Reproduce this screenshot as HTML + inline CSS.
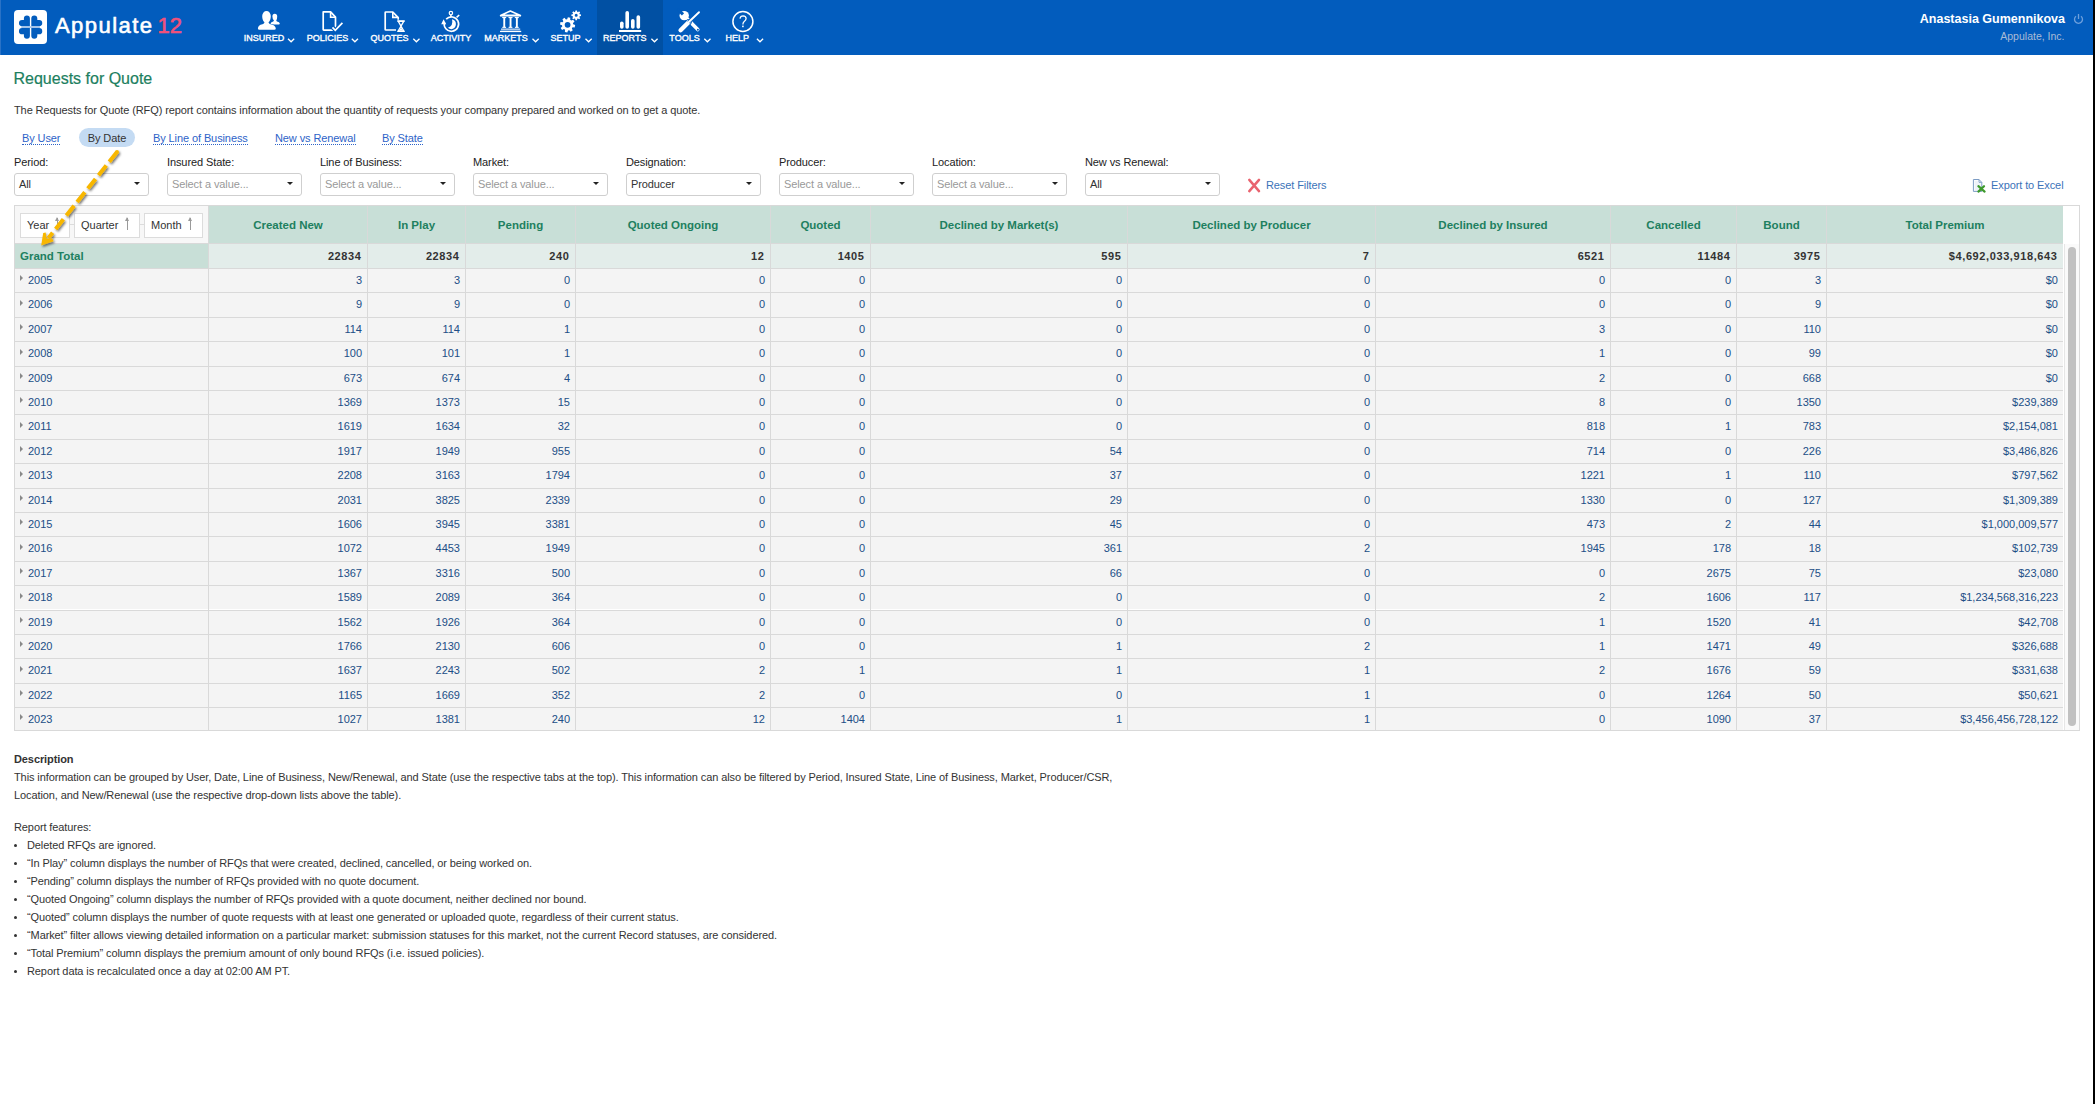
<!DOCTYPE html>
<html><head><meta charset="utf-8">
<style>
*{box-sizing:border-box}
html,body{margin:0;padding:0}
body{width:2095px;height:1104px;overflow:hidden;position:relative;background:#fff;font-family:"Liberation Sans",sans-serif;color:#333}
.abs{position:absolute}
#stripe{position:absolute;left:2093px;top:0;width:2px;height:1104px;background:#000}
/* nav */
#nav{position:absolute;left:0;top:0;width:2093px;height:55px;background:#025cbd}
#logo{position:absolute;left:14px;top:10px;width:33px;height:34px;background:#fff;border-radius:4px}
#brand{position:absolute;left:55px;top:11px;font-size:22px;color:#fff;letter-spacing:1.45px;line-height:30px;white-space:nowrap;-webkit-text-stroke:0.6px #fff}
#brand b{font-weight:normal;color:#f0517a;-webkit-text-stroke:0.6px #f0517a;letter-spacing:0px;margin-left:-3.5px}
.ni{position:absolute;top:0;height:55px}
.nl{position:absolute;top:33.2px;font-size:9px;color:#fff;line-height:11px;white-space:nowrap;-webkit-text-stroke:0.35px #fff}
.chev{position:absolute;top:38px;width:7px;height:4px}
#active{position:absolute;left:597px;top:0;width:66px;height:55px;background:#0150a3}
#uname{position:absolute;right:28px;top:12px;font-size:12.5px;font-weight:bold;color:#fff;white-space:nowrap;line-height:14px}
#ucomp{position:absolute;right:28.5px;top:29.5px;font-size:10.5px;color:#a9bbd6;white-space:nowrap;line-height:12px}
/* page */
#title{position:absolute;left:13.5px;top:69px;font-size:16px;color:#1c8060;-webkit-text-stroke:0.2px #1c8060;line-height:20px;white-space:nowrap}
#intro{position:absolute;left:14px;top:104px;font-size:11px;letter-spacing:-0.1px;color:#333;line-height:13px;white-space:nowrap}
.tab{position:absolute;top:132px;font-size:11px;color:#2d63c8;line-height:12px;white-space:nowrap;border-bottom:1px dotted #2d63c8;letter-spacing:-0.1px}
#pilltab{position:absolute;left:79px;top:128px;width:56px;height:19px;border-radius:10px;background:#c4dbf3;font-size:11px;color:#333;line-height:21px;text-align:center;letter-spacing:-0.1px}
.flab{position:absolute;top:156px;font-size:11px;color:#222;line-height:13px;white-space:nowrap;letter-spacing:-0.1px}
.sel{position:absolute;top:173px;width:135px;height:23px;border:1px solid #cfcfcf;border-radius:3px;background:#fff;font-size:11px;line-height:21px;padding-left:4px;color:#333;white-space:nowrap;letter-spacing:-0.1px}
.sel.ph{color:#999}
.sel:after{content:"";position:absolute;right:8px;top:8px;border-left:3px solid transparent;border-right:3px solid transparent;border-top:3px solid #222}
#reset{position:absolute;left:1266px;top:179px;font-size:11px;color:#3b73b9;line-height:13px;white-space:nowrap;letter-spacing:-0.1px}
#export{position:absolute;left:1991px;top:179px;font-size:11px;color:#3b73b9;line-height:13px;white-space:nowrap;letter-spacing:-0.1px}
/* table */
#tblbox{position:absolute;left:14px;top:205px;width:2066px;height:526px;border:1px solid #d9d9d9;background:#fff}
#tbl div{position:absolute}
.hc0{background:#f7f7f7}
.pill{border:1px solid #dcdcdc;background:#fff;font-size:11px;color:#333;line-height:23px;padding-left:6px;white-space:nowrap}
.pill .up{position:absolute;right:11px;top:4px;width:1.5px;height:12px;background:#9a9a9a}
.pill .up:before{content:"";position:absolute;left:-2px;top:-1px;border-left:2.5px solid transparent;border-right:2.5px solid transparent;border-bottom:4px solid #9a9a9a}
.conn{height:1px;background:#dcdcdc}
.hc{background:#c8dfd7;color:#1e8060;font-weight:bold;font-size:11.5px;line-height:38px;text-align:center;white-space:nowrap}
.gtl{background:#c8dfd7;color:#1e8060;font-weight:bold;font-size:11.5px;line-height:24px;padding-left:5px;white-space:nowrap}
.gtc{background:#e3edea;color:#333;font-weight:bold;font-size:11px;letter-spacing:0.6px;line-height:24px;text-align:right;padding-right:5.5px;white-space:nowrap}
.dl{background:#f4f4f4;color:#214e86;font-size:11px;line-height:22.8px;padding-left:13px;white-space:nowrap}
.dl .tri{position:absolute;left:5px;top:6.4px;border-top:3px solid transparent;border-bottom:3px solid transparent;border-left:3px solid #888}
.dc{background:#f4f4f4;color:#214e86;font-size:11px;line-height:22.8px;text-align:right;padding-right:5px;white-space:nowrap}
.hl{left:15px;width:2048px;height:1px;background:#d9d9d9}
.vl{top:206px;width:1px;height:524px;background:#d9d9d9}
#sbtrack{position:absolute;left:2064px;top:244px;width:15px;height:486px;background:#fafafa;border-left:1px solid #e6e6e6}
#sbthumb{position:absolute;left:2068px;top:247px;width:8px;height:479px;border-radius:4px;background:#c1c1c1}
/* description */
#desc{position:absolute;left:14px;top:750px;font-size:11px;line-height:18px;color:#333;letter-spacing:-0.1px;white-space:nowrap}
#desc b{display:block}
#desc ul{margin:0;padding:0;list-style:none}
#desc li{position:relative;padding-left:13px}
#desc li:before{content:"";position:absolute;left:0px;top:8px;width:3px;height:3px;border-radius:50%;background:#333}
#arrow{position:absolute;left:0;top:0}
</style></head>
<body>
<div id="nav"><div style="position:absolute;left:0;top:0;width:1px;height:55px;background:#2a72c6"></div>
  <div id="logo">
    <svg width="33" height="34" viewBox="14 10 33 34" style="position:absolute;left:0;top:0">
      <g fill="#025cbd">
        <path d="M29.9 26.2 L29.9 18.4 A3 3 0 0 0 23.9 18.4 L23.9 19.9 L22.1 19.9 A3.1 3.1 0 0 0 22.1 26.2 Z"/>
        <path d="M29.9 26.2 L29.9 18.4 A3 3 0 0 0 23.9 18.4 L23.9 19.9 L22.1 19.9 A3.1 3.1 0 0 0 22.1 26.2 Z" transform="matrix(-1 0 0 1 61.2 0)"/>
        <path d="M29.9 26.2 L29.9 18.4 A3 3 0 0 0 23.9 18.4 L23.9 19.9 L22.1 19.9 A3.1 3.1 0 0 0 22.1 26.2 Z" transform="matrix(1 0 0 -1 0 54.2)"/>
        <path d="M29.9 26.2 L29.9 18.4 A3 3 0 0 0 23.9 18.4 L23.9 19.9 L22.1 19.9 A3.1 3.1 0 0 0 22.1 26.2 Z" transform="matrix(-1 0 0 -1 61.2 54.2)"/>
      </g>
      <rect x="21.3" y="26.3" width="18.6" height="1.6" fill="#9bbde6"/>
    </svg>
  </div>
  <div id="brand">Appulate <b>12</b></div>
  <div id="active"></div>
  <div class="nl" style="left:243.8px">INSURED</div>
<div class="nl" style="left:306.7px">POLICIES</div>
<div class="nl" style="left:370.5px">QUOTES</div>
<div class="nl" style="left:430.8px">ACTIVITY</div>
<div class="nl" style="left:484.2px">MARKETS</div>
<div class="nl" style="left:550.4px">SETUP</div>
<div class="nl" style="left:603.1px">REPORTS</div>
<div class="nl" style="left:669.3px">TOOLS</div>
<div class="nl" style="left:725.4px">HELP</div>
<svg class="abs" style="left:0;top:0" width="800" height="55" viewBox="0 0 800 55">
<path d="M288.0 38.8 L291.1 41.8 L294.2 38.8" fill="none" stroke="#fff" stroke-width="1.3"/>
<path d="M351.8 38.8 L354.9 41.8 L358.0 38.8" fill="none" stroke="#fff" stroke-width="1.3"/>
<path d="M413.3 38.8 L416.4 41.8 L419.5 38.8" fill="none" stroke="#fff" stroke-width="1.3"/>
<path d="M532.5 38.8 L535.6 41.8 L538.7 38.8" fill="none" stroke="#fff" stroke-width="1.3"/>
<path d="M585.5 38.8 L588.6 41.8 L591.7 38.8" fill="none" stroke="#fff" stroke-width="1.3"/>
<path d="M651.4 38.8 L654.5 41.8 L657.6 38.8" fill="none" stroke="#fff" stroke-width="1.3"/>
<path d="M704.3 38.8 L707.4 41.8 L710.5 38.8" fill="none" stroke="#fff" stroke-width="1.3"/>
<path d="M756.9 38.8 L760.0 41.8 L763.1 38.8" fill="none" stroke="#fff" stroke-width="1.3"/>
<path d="M270.5 23.8 Q271 21.8 273.2 21.4 Q273.9 21.2 273.9 20.2 Q272.4 19 272.4 16.5 A2.4 2.8 0 0 1 277.2 16.5 Q277.2 19 276.3 20.2 Q276.3 21.2 277 21.4 Q279.6 21.8 279.8 23.6 Q279.8 24.6 278.8 24.6 L271.5 24.6 Q270.5 24.6 270.5 23.8Z" fill="#fff"/><path d="M257.9 28.6 Q258 25.2 262.5 24.3 Q264.3 23.9 264.5 22.2 Q262.2 20.5 262.2 16 A4.3 5.1 0 0 1 270.8 16 Q270.8 20.5 268.5 22.2 Q268.7 23.9 270.5 24.3 Q275.5 25.2 275.8 28.6 Q275.8 29.8 274.3 29.8 L259.4 29.8 Q257.9 29.8 257.9 28.6Z" fill="#fff" stroke="#025cbd" stroke-width="1.1" paint-order="stroke"/>
<path d="M323.2 11.9 H330.6 L335.5 17.2 V29.6 Q335.5 30.1 335 30.1 H323.7 Q323.2 30.1 323.2 29.6Z" fill="none" stroke="#fff" stroke-width="1.7" stroke-linejoin="round"/><path d="M330.6 12 V17.3 H335.6" fill="none" stroke="#fff" stroke-width="1.6"/><path d="M332.5 27.3 L335.3 30.3 L342.4 22.8" fill="none" stroke="#025cbd" stroke-width="4"/><path d="M332.5 27.3 L335.3 30.3 L342.4 22.8" fill="none" stroke="#fff" stroke-width="1.7"/>
<path d="M398.2 19.8 V17.6 L392.8 12 H385.8 Q385.2 12 385.2 12.6 V29.4 Q385.2 30 385.8 30 H396" fill="none" stroke="#fff" stroke-width="1.7" stroke-linejoin="round"/><path d="M392.8 12 V17.4 H398.2" fill="none" stroke="#fff" stroke-width="1.6"/><path d="M397.2 21 H404.8 M397.2 31.4 H404.8" stroke="#fff" stroke-width="1.4"/><path d="M398.3 21.4 L403.7 21.4 L401 26.1 L403.7 30.8 L398.3 30.8 L401 26.1Z" fill="none" stroke="#fff" stroke-width="1.3" stroke-linejoin="round"/><path d="M399.3 30.3 L402.7 30.3 L401 27.6Z" fill="#fff"/>
<path d="M446.2 19.1 A7.2 7.2 0 1 1 444.45 22.2" fill="none" stroke="#fff" stroke-width="1.7"/><path d="M441.2 24.3 L443.6 19.2 L446.2 24.3Z" fill="#fff"/><circle cx="450.9" cy="13.1" r="1.7" fill="none" stroke="#fff" stroke-width="1.2"/><path d="M450.9 14.8 V17" stroke="#fff" stroke-width="1.5"/><path d="M456.6 17.4 L459.2 15" stroke="#fff" stroke-width="1.6"/><path d="M452 19.2 A5.1 5.1 0 0 1 451.6 29.2 Q449.4 29.2 447.9 27.8 Q453.6 25.6 452 19.2Z" fill="#fff"/>
<path d="M500.6 15.4 L510.3 11 L520.4 15.4Z" fill="none" stroke="#fff" stroke-width="1.6" stroke-linejoin="round"/><rect x="500" y="15" width="21" height="1.4" fill="#fff"/><rect x="502.2" y="17" width="4" height="1.1" fill="#fff"/><rect x="503.3" y="17.5" width="1.9" height="9.6" fill="#fff"/><rect x="502.3" y="26.8" width="3.8" height="1.1" fill="#fff"/><rect x="508.5" y="17" width="4" height="1.1" fill="#fff"/><rect x="509.6" y="17.5" width="1.9" height="9.6" fill="#fff"/><rect x="508.6" y="26.8" width="3.8" height="1.1" fill="#fff"/><rect x="514.8" y="17" width="4" height="1.1" fill="#fff"/><rect x="515.9" y="17.5" width="1.9" height="9.6" fill="#fff"/><rect x="514.9" y="26.8" width="3.8" height="1.1" fill="#fff"/><rect x="501" y="28.4" width="19.2" height="1.9" fill="#a9c7eb"/><rect x="500" y="30.8" width="21.2" height="1.3" fill="#fff"/>
<path d="M573.18 24.37 L575.19 25.08 L574.70 27.50 L572.58 27.37 L571.85 28.45 L572.77 30.37 L570.71 31.73 L569.30 30.13 L568.03 30.38 L567.32 32.39 L564.90 31.90 L565.03 29.78 L563.95 29.05 L562.03 29.97 L560.67 27.91 L562.27 26.50 L562.02 25.23 L560.01 24.52 L560.50 22.10 L562.62 22.23 L563.35 21.15 L562.43 19.23 L564.49 17.87 L565.90 19.47 L567.17 19.22 L567.88 17.21 L570.30 17.70 L570.17 19.82 L571.25 20.55 L573.17 19.63 L574.53 21.69 L572.93 23.10Z M570.50 24.80 A2.9 2.9 0 1 0 564.70 24.80 A2.9 2.9 0 1 0 570.50 24.80Z" fill="#fff" fill-rule="evenodd"/>
<path d="M579.66 14.32 L581.03 14.50 L581.03 16.10 L579.66 16.28 L579.34 17.05 L580.18 18.16 L579.06 19.28 L577.95 18.44 L577.18 18.76 L577.00 20.13 L575.40 20.13 L575.22 18.76 L574.45 18.44 L573.34 19.28 L572.22 18.16 L573.06 17.05 L572.74 16.28 L571.37 16.10 L571.37 14.50 L572.74 14.32 L573.06 13.55 L572.22 12.44 L573.34 11.32 L574.45 12.16 L575.22 11.84 L575.40 10.47 L577.00 10.47 L577.18 11.84 L577.95 12.16 L579.06 11.32 L580.18 12.44 L579.34 13.55Z M577.70 15.30 A1.5 1.5 0 1 0 574.70 15.30 A1.5 1.5 0 1 0 577.70 15.30Z" fill="#fff" fill-rule="evenodd"/>
<g fill="#fff"><rect x="620" y="21.4" width="3.6" height="7.4" rx="1.8"/><rect x="625.4" y="11" width="3.6" height="17.8" rx="1.8"/><rect x="631" y="19" width="3.6" height="9.8" rx="1.8"/><rect x="636.5" y="15.3" width="3.6" height="13.5" rx="1.8"/><rect x="619" y="30" width="22.2" height="2" /></g>
<circle cx="684.2" cy="15.6" r="4.7" fill="#fff"/><path d="M677.6 9.2 L683 14.4" stroke="#025cbd" stroke-width="3.1"/><path d="M685.6 17.2 L697.8 29.6" stroke="#fff" stroke-width="3.5" stroke-linecap="round"/><circle cx="697.9" cy="29.7" r="0.95" fill="#025cbd"/><path d="M680.6 30.2 L689 21.9 M689 21.9 L699.2 12" stroke="#025cbd" stroke-width="1.2" fill="none"/><path d="M680.6 30.2 L688.6 22.2" stroke="#025cbd" stroke-width="6.2" stroke-linecap="round"/><path d="M680.6 30.2 L688.6 22.2" stroke="#fff" stroke-width="4.4" stroke-linecap="round"/><path d="M688.4 22.4 L699 12.2" stroke="#025cbd" stroke-width="3.2"/><path d="M688 22.8 L699 12.2" stroke="#fff" stroke-width="1.9" stroke-linecap="round"/>
<circle cx="742.9" cy="21.5" r="10" fill="none" stroke="#fff" stroke-width="1.5"/><path d="M740 18.7 Q740.4 15.9 743.1 15.9 Q746.1 16 746.1 18.6 Q746.1 20.2 744.2 21.5 Q742.9 22.5 742.9 24.6" fill="none" stroke="#fff" stroke-width="1.3"/><rect x="742.1" y="25.6" width="1.6" height="1.6" fill="#fff"/>
</svg>
  <div id="uname">Anastasia Gumennikova</div>
  <div id="ucomp">Appulate, Inc.</div>
  <svg class="abs" style="left:2073px;top:12.5px" width="11" height="12" viewBox="0 0 11 12"><path d="M3 3.2 A4 4 0 1 0 8 3.2" fill="none" stroke="#6d9fdc" stroke-width="1.3"/><path d="M5.5 1 V6" stroke="#6d9fdc" stroke-width="1.3"/></svg>
</div>

<div id="title">Requests for Quote</div>
<div id="intro">The Requests for Quote (RFQ) report contains information about the quantity of requests your company prepared and worked on to get a quote.</div>
<div class="tab" style="left:22px">By User</div>
<div id="pilltab">By Date</div>
<div class="tab" style="left:153px">By Line of Business</div>
<div class="tab" style="left:275px">New vs Renewal</div>
<div class="tab" style="left:382px">By State</div>

<div class="flab" style="left:14px">Period:</div>
<div class="flab" style="left:167px">Insured State:</div>
<div class="flab" style="left:320px">Line of Business:</div>
<div class="flab" style="left:473px">Market:</div>
<div class="flab" style="left:626px">Designation:</div>
<div class="flab" style="left:779px">Producer:</div>
<div class="flab" style="left:932px">Location:</div>
<div class="flab" style="left:1085px">New vs Renewal:</div>
<div class="sel" style="left:14px">All</div>
<div class="sel ph" style="left:167px">Select a value...</div>
<div class="sel ph" style="left:320px">Select a value...</div>
<div class="sel ph" style="left:473px">Select a value...</div>
<div class="sel" style="left:626px">Producer</div>
<div class="sel ph" style="left:779px">Select a value...</div>
<div class="sel ph" style="left:932px">Select a value...</div>
<div class="sel" style="left:1085px">All</div>
<svg class="abs" style="left:1246px;top:177px" width="16" height="17" viewBox="0 0 16 17"><path d="M3.3 2.9 L13 14.1 M13 2.9 L3.3 14.1" stroke="#e9636f" stroke-width="2.5" stroke-linecap="round"/></svg>
<div id="reset">Reset Filters</div>
<svg class="abs" style="left:1970px;top:177px" width="18" height="17" viewBox="0 0 18 17"><path d="M3.4 2.5 H9 L11.8 5.4 V14.4 H3.4 Z" fill="#fbfcfe" stroke="#7d9cc4" stroke-width="1"/><path d="M9 2.5 V5.4 H11.8" fill="none" stroke="#7d9cc4" stroke-width="0.9"/><path d="M4.8 5 H8 M4.8 7 H10.5 M4.8 9 H10.5 M4.8 11 H10.5 M4.8 13 H10.5" stroke="#dde5f0" stroke-width="0.8"/><path d="M8.4 9.2 L14.6 14.6 M14 9.2 L8.4 14.6" stroke="#3d9a2c" stroke-width="2.2" stroke-linecap="round"/></svg>
<div id="export">Export to Excel</div>

<div id="tblbox"></div>
<div id="tbl">
<div class="hc0" style="left:15px;top:206px;width:193px;height:37px"></div>
<div class="pill" style="left:20px;top:213px;width:50px;height:25px"><span>Year</span><i class="up"></i></div>
<div class="pill" style="left:74px;top:213px;width:66px;height:25px"><span>Quarter</span><i class="up"></i></div>
<div class="pill" style="left:144px;top:213px;width:59px;height:25px"><span>Month</span><i class="up"></i></div>
<div class="conn" style="left:70px;top:224px;width:4px"></div>
<div class="conn" style="left:140px;top:224px;width:4px"></div>
<div class="hc" style="left:209px;top:206px;width:158px;height:37px">Created New</div>
<div class="hc" style="left:368px;top:206px;width:97px;height:37px">In Play</div>
<div class="hc" style="left:466px;top:206px;width:109px;height:37px">Pending</div>
<div class="hc" style="left:576px;top:206px;width:194px;height:37px">Quoted Ongoing</div>
<div class="hc" style="left:771px;top:206px;width:99px;height:37px">Quoted</div>
<div class="hc" style="left:871px;top:206px;width:256px;height:37px">Declined by Market(s)</div>
<div class="hc" style="left:1128px;top:206px;width:247px;height:37px">Declined by Producer</div>
<div class="hc" style="left:1376px;top:206px;width:234px;height:37px">Declined by Insured</div>
<div class="hc" style="left:1611px;top:206px;width:125px;height:37px">Cancelled</div>
<div class="hc" style="left:1737px;top:206px;width:89px;height:37px">Bound</div>
<div class="hc" style="left:1827px;top:206px;width:236px;height:37px">Total Premium</div>
<div class="gtl" style="left:15px;top:244px;width:193px;height:24px">Grand Total</div>
<div class="gtc" style="left:209px;top:244px;width:158px;height:24px"><span>22834</span></div>
<div class="gtc" style="left:368px;top:244px;width:97px;height:24px"><span>22834</span></div>
<div class="gtc" style="left:466px;top:244px;width:109px;height:24px"><span>240</span></div>
<div class="gtc" style="left:576px;top:244px;width:194px;height:24px"><span>12</span></div>
<div class="gtc" style="left:771px;top:244px;width:99px;height:24px"><span>1405</span></div>
<div class="gtc" style="left:871px;top:244px;width:256px;height:24px"><span>595</span></div>
<div class="gtc" style="left:1128px;top:244px;width:247px;height:24px"><span>7</span></div>
<div class="gtc" style="left:1376px;top:244px;width:234px;height:24px"><span>6521</span></div>
<div class="gtc" style="left:1611px;top:244px;width:125px;height:24px"><span>11484</span></div>
<div class="gtc" style="left:1737px;top:244px;width:89px;height:24px"><span>3975</span></div>
<div class="gtc" style="left:1827px;top:244px;width:236px;height:24px"><span>$4,692,033,918,643</span></div>
<div class="dl" style="left:15px;top:269.05px;width:193px;height:23.39px"><i class="tri"></i>2005</div>
<div class="dc" style="left:209px;top:269.05px;width:158px;height:23.39px"><span>3</span></div>
<div class="dc" style="left:368px;top:269.05px;width:97px;height:23.39px"><span>3</span></div>
<div class="dc" style="left:466px;top:269.05px;width:109px;height:23.39px"><span>0</span></div>
<div class="dc" style="left:576px;top:269.05px;width:194px;height:23.39px"><span>0</span></div>
<div class="dc" style="left:771px;top:269.05px;width:99px;height:23.39px"><span>0</span></div>
<div class="dc" style="left:871px;top:269.05px;width:256px;height:23.39px"><span>0</span></div>
<div class="dc" style="left:1128px;top:269.05px;width:247px;height:23.39px"><span>0</span></div>
<div class="dc" style="left:1376px;top:269.05px;width:234px;height:23.39px"><span>0</span></div>
<div class="dc" style="left:1611px;top:269.05px;width:125px;height:23.39px"><span>0</span></div>
<div class="dc" style="left:1737px;top:269.05px;width:89px;height:23.39px"><span>3</span></div>
<div class="dc" style="left:1827px;top:269.05px;width:236px;height:23.39px"><span>$0</span></div>
<div class="dl" style="left:15px;top:293.44px;width:193px;height:23.39px"><i class="tri"></i>2006</div>
<div class="dc" style="left:209px;top:293.44px;width:158px;height:23.39px"><span>9</span></div>
<div class="dc" style="left:368px;top:293.44px;width:97px;height:23.39px"><span>9</span></div>
<div class="dc" style="left:466px;top:293.44px;width:109px;height:23.39px"><span>0</span></div>
<div class="dc" style="left:576px;top:293.44px;width:194px;height:23.39px"><span>0</span></div>
<div class="dc" style="left:771px;top:293.44px;width:99px;height:23.39px"><span>0</span></div>
<div class="dc" style="left:871px;top:293.44px;width:256px;height:23.39px"><span>0</span></div>
<div class="dc" style="left:1128px;top:293.44px;width:247px;height:23.39px"><span>0</span></div>
<div class="dc" style="left:1376px;top:293.44px;width:234px;height:23.39px"><span>0</span></div>
<div class="dc" style="left:1611px;top:293.44px;width:125px;height:23.39px"><span>0</span></div>
<div class="dc" style="left:1737px;top:293.44px;width:89px;height:23.39px"><span>9</span></div>
<div class="dc" style="left:1827px;top:293.44px;width:236px;height:23.39px"><span>$0</span></div>
<div class="dl" style="left:15px;top:317.83px;width:193px;height:23.39px"><i class="tri"></i>2007</div>
<div class="dc" style="left:209px;top:317.83px;width:158px;height:23.39px"><span>114</span></div>
<div class="dc" style="left:368px;top:317.83px;width:97px;height:23.39px"><span>114</span></div>
<div class="dc" style="left:466px;top:317.83px;width:109px;height:23.39px"><span>1</span></div>
<div class="dc" style="left:576px;top:317.83px;width:194px;height:23.39px"><span>0</span></div>
<div class="dc" style="left:771px;top:317.83px;width:99px;height:23.39px"><span>0</span></div>
<div class="dc" style="left:871px;top:317.83px;width:256px;height:23.39px"><span>0</span></div>
<div class="dc" style="left:1128px;top:317.83px;width:247px;height:23.39px"><span>0</span></div>
<div class="dc" style="left:1376px;top:317.83px;width:234px;height:23.39px"><span>3</span></div>
<div class="dc" style="left:1611px;top:317.83px;width:125px;height:23.39px"><span>0</span></div>
<div class="dc" style="left:1737px;top:317.83px;width:89px;height:23.39px"><span>110</span></div>
<div class="dc" style="left:1827px;top:317.83px;width:236px;height:23.39px"><span>$0</span></div>
<div class="dl" style="left:15px;top:342.22px;width:193px;height:23.39px"><i class="tri"></i>2008</div>
<div class="dc" style="left:209px;top:342.22px;width:158px;height:23.39px"><span>100</span></div>
<div class="dc" style="left:368px;top:342.22px;width:97px;height:23.39px"><span>101</span></div>
<div class="dc" style="left:466px;top:342.22px;width:109px;height:23.39px"><span>1</span></div>
<div class="dc" style="left:576px;top:342.22px;width:194px;height:23.39px"><span>0</span></div>
<div class="dc" style="left:771px;top:342.22px;width:99px;height:23.39px"><span>0</span></div>
<div class="dc" style="left:871px;top:342.22px;width:256px;height:23.39px"><span>0</span></div>
<div class="dc" style="left:1128px;top:342.22px;width:247px;height:23.39px"><span>0</span></div>
<div class="dc" style="left:1376px;top:342.22px;width:234px;height:23.39px"><span>1</span></div>
<div class="dc" style="left:1611px;top:342.22px;width:125px;height:23.39px"><span>0</span></div>
<div class="dc" style="left:1737px;top:342.22px;width:89px;height:23.39px"><span>99</span></div>
<div class="dc" style="left:1827px;top:342.22px;width:236px;height:23.39px"><span>$0</span></div>
<div class="dl" style="left:15px;top:366.61px;width:193px;height:23.39px"><i class="tri"></i>2009</div>
<div class="dc" style="left:209px;top:366.61px;width:158px;height:23.39px"><span>673</span></div>
<div class="dc" style="left:368px;top:366.61px;width:97px;height:23.39px"><span>674</span></div>
<div class="dc" style="left:466px;top:366.61px;width:109px;height:23.39px"><span>4</span></div>
<div class="dc" style="left:576px;top:366.61px;width:194px;height:23.39px"><span>0</span></div>
<div class="dc" style="left:771px;top:366.61px;width:99px;height:23.39px"><span>0</span></div>
<div class="dc" style="left:871px;top:366.61px;width:256px;height:23.39px"><span>0</span></div>
<div class="dc" style="left:1128px;top:366.61px;width:247px;height:23.39px"><span>0</span></div>
<div class="dc" style="left:1376px;top:366.61px;width:234px;height:23.39px"><span>2</span></div>
<div class="dc" style="left:1611px;top:366.61px;width:125px;height:23.39px"><span>0</span></div>
<div class="dc" style="left:1737px;top:366.61px;width:89px;height:23.39px"><span>668</span></div>
<div class="dc" style="left:1827px;top:366.61px;width:236px;height:23.39px"><span>$0</span></div>
<div class="dl" style="left:15px;top:391.00px;width:193px;height:23.39px"><i class="tri"></i>2010</div>
<div class="dc" style="left:209px;top:391.00px;width:158px;height:23.39px"><span>1369</span></div>
<div class="dc" style="left:368px;top:391.00px;width:97px;height:23.39px"><span>1373</span></div>
<div class="dc" style="left:466px;top:391.00px;width:109px;height:23.39px"><span>15</span></div>
<div class="dc" style="left:576px;top:391.00px;width:194px;height:23.39px"><span>0</span></div>
<div class="dc" style="left:771px;top:391.00px;width:99px;height:23.39px"><span>0</span></div>
<div class="dc" style="left:871px;top:391.00px;width:256px;height:23.39px"><span>0</span></div>
<div class="dc" style="left:1128px;top:391.00px;width:247px;height:23.39px"><span>0</span></div>
<div class="dc" style="left:1376px;top:391.00px;width:234px;height:23.39px"><span>8</span></div>
<div class="dc" style="left:1611px;top:391.00px;width:125px;height:23.39px"><span>0</span></div>
<div class="dc" style="left:1737px;top:391.00px;width:89px;height:23.39px"><span>1350</span></div>
<div class="dc" style="left:1827px;top:391.00px;width:236px;height:23.39px"><span>$239,389</span></div>
<div class="dl" style="left:15px;top:415.39px;width:193px;height:23.39px"><i class="tri"></i>2011</div>
<div class="dc" style="left:209px;top:415.39px;width:158px;height:23.39px"><span>1619</span></div>
<div class="dc" style="left:368px;top:415.39px;width:97px;height:23.39px"><span>1634</span></div>
<div class="dc" style="left:466px;top:415.39px;width:109px;height:23.39px"><span>32</span></div>
<div class="dc" style="left:576px;top:415.39px;width:194px;height:23.39px"><span>0</span></div>
<div class="dc" style="left:771px;top:415.39px;width:99px;height:23.39px"><span>0</span></div>
<div class="dc" style="left:871px;top:415.39px;width:256px;height:23.39px"><span>0</span></div>
<div class="dc" style="left:1128px;top:415.39px;width:247px;height:23.39px"><span>0</span></div>
<div class="dc" style="left:1376px;top:415.39px;width:234px;height:23.39px"><span>818</span></div>
<div class="dc" style="left:1611px;top:415.39px;width:125px;height:23.39px"><span>1</span></div>
<div class="dc" style="left:1737px;top:415.39px;width:89px;height:23.39px"><span>783</span></div>
<div class="dc" style="left:1827px;top:415.39px;width:236px;height:23.39px"><span>$2,154,081</span></div>
<div class="dl" style="left:15px;top:439.78px;width:193px;height:23.39px"><i class="tri"></i>2012</div>
<div class="dc" style="left:209px;top:439.78px;width:158px;height:23.39px"><span>1917</span></div>
<div class="dc" style="left:368px;top:439.78px;width:97px;height:23.39px"><span>1949</span></div>
<div class="dc" style="left:466px;top:439.78px;width:109px;height:23.39px"><span>955</span></div>
<div class="dc" style="left:576px;top:439.78px;width:194px;height:23.39px"><span>0</span></div>
<div class="dc" style="left:771px;top:439.78px;width:99px;height:23.39px"><span>0</span></div>
<div class="dc" style="left:871px;top:439.78px;width:256px;height:23.39px"><span>54</span></div>
<div class="dc" style="left:1128px;top:439.78px;width:247px;height:23.39px"><span>0</span></div>
<div class="dc" style="left:1376px;top:439.78px;width:234px;height:23.39px"><span>714</span></div>
<div class="dc" style="left:1611px;top:439.78px;width:125px;height:23.39px"><span>0</span></div>
<div class="dc" style="left:1737px;top:439.78px;width:89px;height:23.39px"><span>226</span></div>
<div class="dc" style="left:1827px;top:439.78px;width:236px;height:23.39px"><span>$3,486,826</span></div>
<div class="dl" style="left:15px;top:464.17px;width:193px;height:23.39px"><i class="tri"></i>2013</div>
<div class="dc" style="left:209px;top:464.17px;width:158px;height:23.39px"><span>2208</span></div>
<div class="dc" style="left:368px;top:464.17px;width:97px;height:23.39px"><span>3163</span></div>
<div class="dc" style="left:466px;top:464.17px;width:109px;height:23.39px"><span>1794</span></div>
<div class="dc" style="left:576px;top:464.17px;width:194px;height:23.39px"><span>0</span></div>
<div class="dc" style="left:771px;top:464.17px;width:99px;height:23.39px"><span>0</span></div>
<div class="dc" style="left:871px;top:464.17px;width:256px;height:23.39px"><span>37</span></div>
<div class="dc" style="left:1128px;top:464.17px;width:247px;height:23.39px"><span>0</span></div>
<div class="dc" style="left:1376px;top:464.17px;width:234px;height:23.39px"><span>1221</span></div>
<div class="dc" style="left:1611px;top:464.17px;width:125px;height:23.39px"><span>1</span></div>
<div class="dc" style="left:1737px;top:464.17px;width:89px;height:23.39px"><span>110</span></div>
<div class="dc" style="left:1827px;top:464.17px;width:236px;height:23.39px"><span>$797,562</span></div>
<div class="dl" style="left:15px;top:488.56px;width:193px;height:23.39px"><i class="tri"></i>2014</div>
<div class="dc" style="left:209px;top:488.56px;width:158px;height:23.39px"><span>2031</span></div>
<div class="dc" style="left:368px;top:488.56px;width:97px;height:23.39px"><span>3825</span></div>
<div class="dc" style="left:466px;top:488.56px;width:109px;height:23.39px"><span>2339</span></div>
<div class="dc" style="left:576px;top:488.56px;width:194px;height:23.39px"><span>0</span></div>
<div class="dc" style="left:771px;top:488.56px;width:99px;height:23.39px"><span>0</span></div>
<div class="dc" style="left:871px;top:488.56px;width:256px;height:23.39px"><span>29</span></div>
<div class="dc" style="left:1128px;top:488.56px;width:247px;height:23.39px"><span>0</span></div>
<div class="dc" style="left:1376px;top:488.56px;width:234px;height:23.39px"><span>1330</span></div>
<div class="dc" style="left:1611px;top:488.56px;width:125px;height:23.39px"><span>0</span></div>
<div class="dc" style="left:1737px;top:488.56px;width:89px;height:23.39px"><span>127</span></div>
<div class="dc" style="left:1827px;top:488.56px;width:236px;height:23.39px"><span>$1,309,389</span></div>
<div class="dl" style="left:15px;top:512.95px;width:193px;height:23.39px"><i class="tri"></i>2015</div>
<div class="dc" style="left:209px;top:512.95px;width:158px;height:23.39px"><span>1606</span></div>
<div class="dc" style="left:368px;top:512.95px;width:97px;height:23.39px"><span>3945</span></div>
<div class="dc" style="left:466px;top:512.95px;width:109px;height:23.39px"><span>3381</span></div>
<div class="dc" style="left:576px;top:512.95px;width:194px;height:23.39px"><span>0</span></div>
<div class="dc" style="left:771px;top:512.95px;width:99px;height:23.39px"><span>0</span></div>
<div class="dc" style="left:871px;top:512.95px;width:256px;height:23.39px"><span>45</span></div>
<div class="dc" style="left:1128px;top:512.95px;width:247px;height:23.39px"><span>0</span></div>
<div class="dc" style="left:1376px;top:512.95px;width:234px;height:23.39px"><span>473</span></div>
<div class="dc" style="left:1611px;top:512.95px;width:125px;height:23.39px"><span>2</span></div>
<div class="dc" style="left:1737px;top:512.95px;width:89px;height:23.39px"><span>44</span></div>
<div class="dc" style="left:1827px;top:512.95px;width:236px;height:23.39px"><span>$1,000,009,577</span></div>
<div class="dl" style="left:15px;top:537.34px;width:193px;height:23.39px"><i class="tri"></i>2016</div>
<div class="dc" style="left:209px;top:537.34px;width:158px;height:23.39px"><span>1072</span></div>
<div class="dc" style="left:368px;top:537.34px;width:97px;height:23.39px"><span>4453</span></div>
<div class="dc" style="left:466px;top:537.34px;width:109px;height:23.39px"><span>1949</span></div>
<div class="dc" style="left:576px;top:537.34px;width:194px;height:23.39px"><span>0</span></div>
<div class="dc" style="left:771px;top:537.34px;width:99px;height:23.39px"><span>0</span></div>
<div class="dc" style="left:871px;top:537.34px;width:256px;height:23.39px"><span>361</span></div>
<div class="dc" style="left:1128px;top:537.34px;width:247px;height:23.39px"><span>2</span></div>
<div class="dc" style="left:1376px;top:537.34px;width:234px;height:23.39px"><span>1945</span></div>
<div class="dc" style="left:1611px;top:537.34px;width:125px;height:23.39px"><span>178</span></div>
<div class="dc" style="left:1737px;top:537.34px;width:89px;height:23.39px"><span>18</span></div>
<div class="dc" style="left:1827px;top:537.34px;width:236px;height:23.39px"><span>$102,739</span></div>
<div class="dl" style="left:15px;top:561.73px;width:193px;height:23.39px"><i class="tri"></i>2017</div>
<div class="dc" style="left:209px;top:561.73px;width:158px;height:23.39px"><span>1367</span></div>
<div class="dc" style="left:368px;top:561.73px;width:97px;height:23.39px"><span>3316</span></div>
<div class="dc" style="left:466px;top:561.73px;width:109px;height:23.39px"><span>500</span></div>
<div class="dc" style="left:576px;top:561.73px;width:194px;height:23.39px"><span>0</span></div>
<div class="dc" style="left:771px;top:561.73px;width:99px;height:23.39px"><span>0</span></div>
<div class="dc" style="left:871px;top:561.73px;width:256px;height:23.39px"><span>66</span></div>
<div class="dc" style="left:1128px;top:561.73px;width:247px;height:23.39px"><span>0</span></div>
<div class="dc" style="left:1376px;top:561.73px;width:234px;height:23.39px"><span>0</span></div>
<div class="dc" style="left:1611px;top:561.73px;width:125px;height:23.39px"><span>2675</span></div>
<div class="dc" style="left:1737px;top:561.73px;width:89px;height:23.39px"><span>75</span></div>
<div class="dc" style="left:1827px;top:561.73px;width:236px;height:23.39px"><span>$23,080</span></div>
<div class="dl" style="left:15px;top:586.12px;width:193px;height:23.39px"><i class="tri"></i>2018</div>
<div class="dc" style="left:209px;top:586.12px;width:158px;height:23.39px"><span>1589</span></div>
<div class="dc" style="left:368px;top:586.12px;width:97px;height:23.39px"><span>2089</span></div>
<div class="dc" style="left:466px;top:586.12px;width:109px;height:23.39px"><span>364</span></div>
<div class="dc" style="left:576px;top:586.12px;width:194px;height:23.39px"><span>0</span></div>
<div class="dc" style="left:771px;top:586.12px;width:99px;height:23.39px"><span>0</span></div>
<div class="dc" style="left:871px;top:586.12px;width:256px;height:23.39px"><span>0</span></div>
<div class="dc" style="left:1128px;top:586.12px;width:247px;height:23.39px"><span>0</span></div>
<div class="dc" style="left:1376px;top:586.12px;width:234px;height:23.39px"><span>2</span></div>
<div class="dc" style="left:1611px;top:586.12px;width:125px;height:23.39px"><span>1606</span></div>
<div class="dc" style="left:1737px;top:586.12px;width:89px;height:23.39px"><span>117</span></div>
<div class="dc" style="left:1827px;top:586.12px;width:236px;height:23.39px"><span>$1,234,568,316,223</span></div>
<div class="dl" style="left:15px;top:610.51px;width:193px;height:23.39px"><i class="tri"></i>2019</div>
<div class="dc" style="left:209px;top:610.51px;width:158px;height:23.39px"><span>1562</span></div>
<div class="dc" style="left:368px;top:610.51px;width:97px;height:23.39px"><span>1926</span></div>
<div class="dc" style="left:466px;top:610.51px;width:109px;height:23.39px"><span>364</span></div>
<div class="dc" style="left:576px;top:610.51px;width:194px;height:23.39px"><span>0</span></div>
<div class="dc" style="left:771px;top:610.51px;width:99px;height:23.39px"><span>0</span></div>
<div class="dc" style="left:871px;top:610.51px;width:256px;height:23.39px"><span>0</span></div>
<div class="dc" style="left:1128px;top:610.51px;width:247px;height:23.39px"><span>0</span></div>
<div class="dc" style="left:1376px;top:610.51px;width:234px;height:23.39px"><span>1</span></div>
<div class="dc" style="left:1611px;top:610.51px;width:125px;height:23.39px"><span>1520</span></div>
<div class="dc" style="left:1737px;top:610.51px;width:89px;height:23.39px"><span>41</span></div>
<div class="dc" style="left:1827px;top:610.51px;width:236px;height:23.39px"><span>$42,708</span></div>
<div class="dl" style="left:15px;top:634.90px;width:193px;height:23.39px"><i class="tri"></i>2020</div>
<div class="dc" style="left:209px;top:634.90px;width:158px;height:23.39px"><span>1766</span></div>
<div class="dc" style="left:368px;top:634.90px;width:97px;height:23.39px"><span>2130</span></div>
<div class="dc" style="left:466px;top:634.90px;width:109px;height:23.39px"><span>606</span></div>
<div class="dc" style="left:576px;top:634.90px;width:194px;height:23.39px"><span>0</span></div>
<div class="dc" style="left:771px;top:634.90px;width:99px;height:23.39px"><span>0</span></div>
<div class="dc" style="left:871px;top:634.90px;width:256px;height:23.39px"><span>1</span></div>
<div class="dc" style="left:1128px;top:634.90px;width:247px;height:23.39px"><span>2</span></div>
<div class="dc" style="left:1376px;top:634.90px;width:234px;height:23.39px"><span>1</span></div>
<div class="dc" style="left:1611px;top:634.90px;width:125px;height:23.39px"><span>1471</span></div>
<div class="dc" style="left:1737px;top:634.90px;width:89px;height:23.39px"><span>49</span></div>
<div class="dc" style="left:1827px;top:634.90px;width:236px;height:23.39px"><span>$326,688</span></div>
<div class="dl" style="left:15px;top:659.29px;width:193px;height:23.39px"><i class="tri"></i>2021</div>
<div class="dc" style="left:209px;top:659.29px;width:158px;height:23.39px"><span>1637</span></div>
<div class="dc" style="left:368px;top:659.29px;width:97px;height:23.39px"><span>2243</span></div>
<div class="dc" style="left:466px;top:659.29px;width:109px;height:23.39px"><span>502</span></div>
<div class="dc" style="left:576px;top:659.29px;width:194px;height:23.39px"><span>2</span></div>
<div class="dc" style="left:771px;top:659.29px;width:99px;height:23.39px"><span>1</span></div>
<div class="dc" style="left:871px;top:659.29px;width:256px;height:23.39px"><span>1</span></div>
<div class="dc" style="left:1128px;top:659.29px;width:247px;height:23.39px"><span>1</span></div>
<div class="dc" style="left:1376px;top:659.29px;width:234px;height:23.39px"><span>2</span></div>
<div class="dc" style="left:1611px;top:659.29px;width:125px;height:23.39px"><span>1676</span></div>
<div class="dc" style="left:1737px;top:659.29px;width:89px;height:23.39px"><span>59</span></div>
<div class="dc" style="left:1827px;top:659.29px;width:236px;height:23.39px"><span>$331,638</span></div>
<div class="dl" style="left:15px;top:683.68px;width:193px;height:23.39px"><i class="tri"></i>2022</div>
<div class="dc" style="left:209px;top:683.68px;width:158px;height:23.39px"><span>1165</span></div>
<div class="dc" style="left:368px;top:683.68px;width:97px;height:23.39px"><span>1669</span></div>
<div class="dc" style="left:466px;top:683.68px;width:109px;height:23.39px"><span>352</span></div>
<div class="dc" style="left:576px;top:683.68px;width:194px;height:23.39px"><span>2</span></div>
<div class="dc" style="left:771px;top:683.68px;width:99px;height:23.39px"><span>0</span></div>
<div class="dc" style="left:871px;top:683.68px;width:256px;height:23.39px"><span>0</span></div>
<div class="dc" style="left:1128px;top:683.68px;width:247px;height:23.39px"><span>1</span></div>
<div class="dc" style="left:1376px;top:683.68px;width:234px;height:23.39px"><span>0</span></div>
<div class="dc" style="left:1611px;top:683.68px;width:125px;height:23.39px"><span>1264</span></div>
<div class="dc" style="left:1737px;top:683.68px;width:89px;height:23.39px"><span>50</span></div>
<div class="dc" style="left:1827px;top:683.68px;width:236px;height:23.39px"><span>$50,621</span></div>
<div class="dl" style="left:15px;top:708.07px;width:193px;height:21.93px"><i class="tri"></i>2023</div>
<div class="dc" style="left:209px;top:708.07px;width:158px;height:21.93px"><span>1027</span></div>
<div class="dc" style="left:368px;top:708.07px;width:97px;height:21.93px"><span>1381</span></div>
<div class="dc" style="left:466px;top:708.07px;width:109px;height:21.93px"><span>240</span></div>
<div class="dc" style="left:576px;top:708.07px;width:194px;height:21.93px"><span>12</span></div>
<div class="dc" style="left:771px;top:708.07px;width:99px;height:21.93px"><span>1404</span></div>
<div class="dc" style="left:871px;top:708.07px;width:256px;height:21.93px"><span>1</span></div>
<div class="dc" style="left:1128px;top:708.07px;width:247px;height:21.93px"><span>1</span></div>
<div class="dc" style="left:1376px;top:708.07px;width:234px;height:21.93px"><span>0</span></div>
<div class="dc" style="left:1611px;top:708.07px;width:125px;height:21.93px"><span>1090</span></div>
<div class="dc" style="left:1737px;top:708.07px;width:89px;height:21.93px"><span>37</span></div>
<div class="dc" style="left:1827px;top:708.07px;width:236px;height:21.93px"><span>$3,456,456,728,122</span></div>
<div class="hl" style="top:243px"></div>
<div class="hl" style="top:268.05px"></div>
<div class="hl" style="top:292.44px"></div>
<div class="hl" style="top:316.83px"></div>
<div class="hl" style="top:341.22px"></div>
<div class="hl" style="top:365.61px"></div>
<div class="hl" style="top:390.00px"></div>
<div class="hl" style="top:414.39px"></div>
<div class="hl" style="top:438.78px"></div>
<div class="hl" style="top:463.17px"></div>
<div class="hl" style="top:487.56px"></div>
<div class="hl" style="top:511.95px"></div>
<div class="hl" style="top:536.34px"></div>
<div class="hl" style="top:560.73px"></div>
<div class="hl" style="top:585.12px"></div>
<div class="hl" style="top:609.51px"></div>
<div class="hl" style="top:633.90px"></div>
<div class="hl" style="top:658.29px"></div>
<div class="hl" style="top:682.68px"></div>
<div class="hl" style="top:707.07px"></div>
<div class="hl" style="top:730px;left:14px;width:2066px;background:#d9d9d9"></div>
<div class="vl" style="left:208px"></div>
<div class="vl" style="left:367px"></div>
<div class="vl" style="left:465px"></div>
<div class="vl" style="left:575px"></div>
<div class="vl" style="left:770px"></div>
<div class="vl" style="left:870px"></div>
<div class="vl" style="left:1127px"></div>
<div class="vl" style="left:1375px"></div>
<div class="vl" style="left:1610px"></div>
<div class="vl" style="left:1736px"></div>
<div class="vl" style="left:1826px"></div>
</div>
<div id="sbtrack"></div>
<div id="sbthumb"></div>

<div id="desc">
<b>Description</b>
This information can be grouped by User, Date, Line of Business, New/Renewal, and State (use the respective tabs at the top). This information can also be filtered by Period, Insured State, Line of Business, Market, Producer/CSR,<br>
Location, and New/Renewal (use the respective drop-down lists above the table).
<div style="margin-top:14px">Report features:</div>
<ul>
<li>Deleted RFQs are ignored.</li>
<li>“In Play” column displays the number of RFQs that were created, declined, cancelled, or being worked on.</li>
<li>“Pending” column displays the number of RFQs provided with no quote document.</li>
<li>“Quoted Ongoing” column displays the number of RFQs provided with a quote document, neither declined nor bound.</li>
<li>“Quoted” column displays the number of quote requests with at least one generated or uploaded quote, regardless of their current status.</li>
<li>“Market” filter allows viewing detailed information on a particular market: submission statuses for this market, not the current Record statuses, are considered.</li>
<li>“Total Premium” column displays the premium amount of only bound RFQs (i.e. issued policies).</li>
<li>Report data is recalculated once a day at 02:00 AM PT.</li>
</ul>
</div>

<svg id="arrow" width="200" height="260" viewBox="0 0 200 260">
  <defs><filter id="sh" x="-30%" y="-30%" width="160%" height="160%"><feDropShadow dx="1.2" dy="1.6" stdDeviation="1.2" flood-color="#000" flood-opacity="0.55"/></filter></defs>
  <g filter="url(#sh)" fill="none" stroke="#f8b700">
    <path d="M117 152 L48.4 238" stroke-width="4" stroke-dasharray="12.4 4.8"/>
    <circle cx="117" cy="152" r="2" fill="#f8b700" stroke="none"/>
    <path d="M41.2 245.6 L43.2 233 L45.7 232.6 L46.5 238.6 L52.2 238.4 L53.6 241.3Z" fill="#f8b700" stroke="none"/>
  </g>
</svg>
<div id="stripe"></div>
</body></html>
